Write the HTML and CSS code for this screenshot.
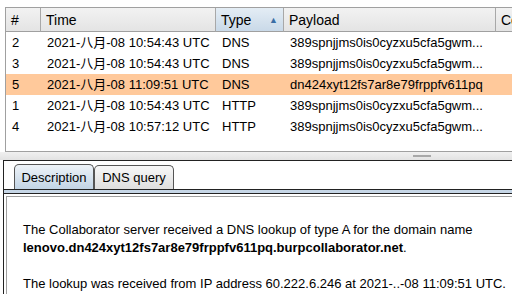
FILE: index.html
```html
<!DOCTYPE html>
<html>
<head>
<meta charset="utf-8">
<link rel="stylesheet" href="styles.css">
</head>
<body>
<div class="page">
  <div class="tablewrap">
    <div class="grid">
      <div class="hrow">
        <div class="hcell">#</div>
        <div class="hcell">Time</div>
        <div class="hcell sorted"><span>Type</span><span class="arrow">▲</span></div>
        <div class="hcell">Payload</div>
        <div class="hcell">Co</div>
      </div>
      <div class="row"><div class="c">2</div><div class="c">2021-八月-08 10:54:43 UTC</div><div class="c">DNS</div><div class="c">389spnjjms0is0cyzxu5cfa5gwm...</div><div class="c"></div></div>
      <div class="row"><div class="c">3</div><div class="c">2021-八月-08 10:54:43 UTC</div><div class="c">DNS</div><div class="c">389spnjjms0is0cyzxu5cfa5gwm...</div><div class="c"></div></div>
      <div class="row sel"><div class="c">5</div><div class="c">2021-八月-08 11:09:51 UTC</div><div class="c">DNS</div><div class="c">dn424xyt12fs7ar8e79frppfv611pq</div><div class="c"></div></div>
      <div class="row"><div class="c">1</div><div class="c">2021-八月-08 10:54:43 UTC</div><div class="c">HTTP</div><div class="c">389spnjjms0is0cyzxu5cfa5gwm...</div><div class="c"></div></div>
      <div class="row"><div class="c">4</div><div class="c">2021-八月-08 10:57:12 UTC</div><div class="c">HTTP</div><div class="c">389spnjjms0is0cyzxu5cfa5gwm...</div><div class="c"></div></div>
    </div>
  </div>
  <div class="splitter"><span class="grip"></span></div>
  <div class="bottom">
    <div class="tabs">
      <div class="tab active">Description</div>
      <div class="tab">DNS query</div>
    </div>
    <div class="tabline"></div>
    <div class="content">
      <p>The Collaborator server received a DNS lookup of type A for the domain name<br><b>lenovo.dn424xyt12fs7ar8e79frppfv611pq.burpcollaborator.net</b>.</p>
      <p>The lookup was received from IP address 60.222.6.246 at 2021-..-08 11:09:51 UTC.</p>
    </div>
  </div>
</div>
</body>
</html>
```
FILE: styles.css
```css
html, body {
  margin: 0;
  padding: 0;
  background: #ffffff;
  overflow: hidden;
}
.page {
  width: 512px;
  height: 294px;
  overflow: hidden;
  font-family: "Liberation Sans", Arial, "Noto Sans CJK SC", sans-serif;
  font-size: 13px;
  color: #000;
}
.tablewrap {
  margin: 7px 0 0 5px;
  width: 560px;
  height: 145px;
  border: 1px solid #a0a0a0;
  border-right: none;
  background: #ffffff;
  box-sizing: border-box;
}
.grid {
  display: grid;
  grid-template-columns: 35px 175px 68px 212px 70px;
}
.hrow, .row {
  display: contents;
}
.hcell {
  height: 23px;
  border-bottom: 1px solid #a0a0a0;
  border-right: 1px solid #a8a8a8;
  background: linear-gradient(#f2f2f2, #e4e4e4);
  display: flex;
  align-items: center;
  padding-left: 5px;
  box-sizing: content-box;
  font-size: 14px;
  white-space: nowrap;
  overflow: hidden;
}
.hcell.sorted {
  background: linear-gradient(#e4edf5, #c9d9e8);
  justify-content: space-between;
  padding-right: 5px;
}
.arrow {
  font-size: 9px;
  color: #3a6ea5;
}
.c {
  height: 21px;
  line-height: 22px;
  padding-left: 6px;
  white-space: nowrap;
  overflow: hidden;
}
.row.sel .c {
  background: #ffc99b;
}
.splitter {
  height: 8px;
  background: linear-gradient(#f0f0f0, #e2e2e2);
  position: relative;
}
.grip {
  position: absolute;
  left: 413px;
  top: 3px;
  width: 18px;
  height: 2px;
  background: #a8a8a8;
}
.bottom {
  margin-left: 3px;
  border-top: 1px solid #222;
  border-left: 1px solid #222;
  height: 200px;
}
.tabs {
  display: flex;
  padding: 3px 0 0 10px;
  height: 28px;
  box-sizing: border-box;
  align-items: flex-end;
}
.tab {
  width: 80px;
  height: 24px;
  border: 1px solid #555;
  border-bottom: none;
  border-radius: 5px 5px 0 0;
  background: linear-gradient(#f8f8f8, #dedede);
  display: flex;
  align-items: center;
  justify-content: center;
  font-size: 13px;
  box-sizing: border-box;
}
.tab.active {
  background: linear-gradient(#eef3f8, #c2d4e5);
  height: 25px;
}
.tabline {
  height: 3px;
  border-top: 1px solid #222;
  border-bottom: 1px solid #222;
  background: #c6d6e6;
}
.content {
  margin: 2px 0 0 2px;
  border-top: 1px solid #a0a0a0;
  border-left: 1px solid #a0a0a0;
  padding: 24px 0 0 16px;
  height: 200px;
}
.content p {
  margin: 0 0 18px 0;
  line-height: 18px;
  white-space: nowrap;
}
```
